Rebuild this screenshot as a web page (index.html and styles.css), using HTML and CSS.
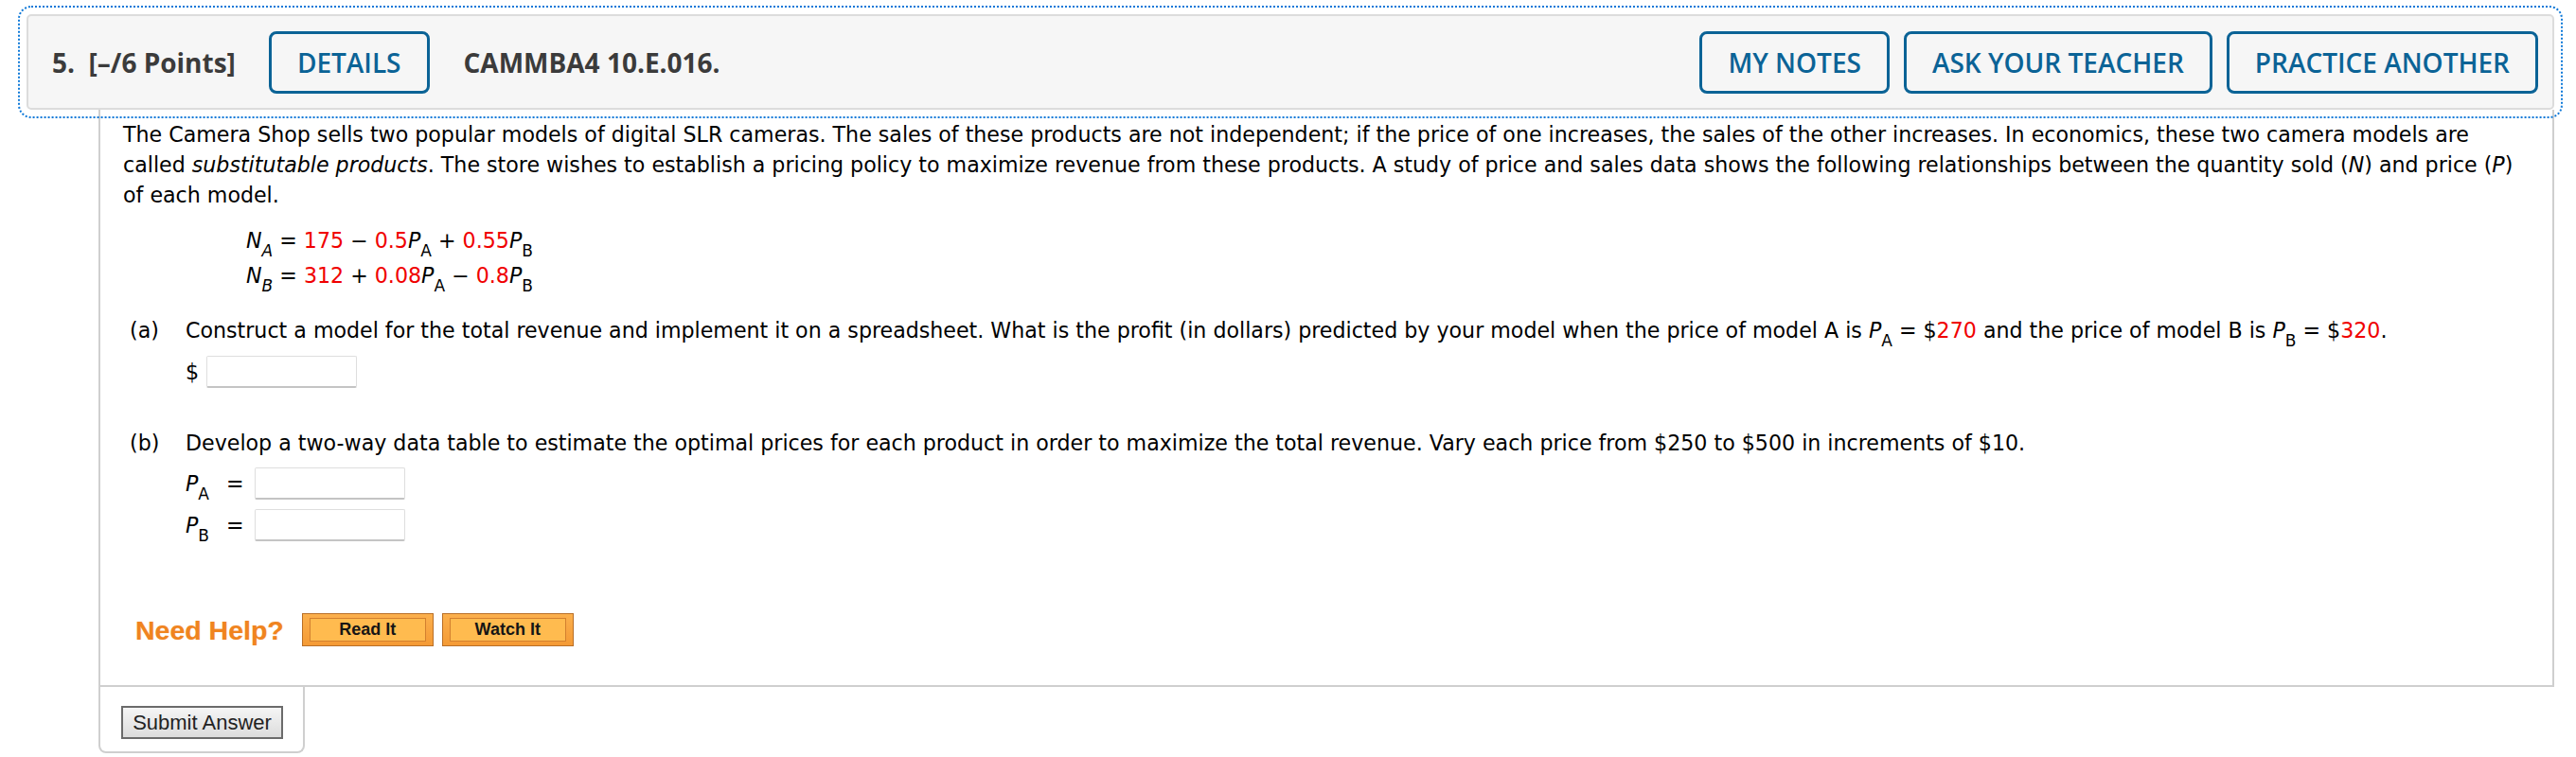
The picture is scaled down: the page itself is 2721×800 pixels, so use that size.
FILE: index.html
```html
<!DOCTYPE html>
<html>
<head>
<meta charset="utf-8">
<title>Question 5</title>
<link rel="stylesheet" href="styles.css">
</head>
<body>
<div class="question">
  <div class="qhead">
    <span class="qnum">5.&nbsp;&nbsp;[–/6 Points]</span>
    <button class="hbtn">DETAILS</button>
    <span class="qcode">CAMMBA4 10.E.016.</span>
    <div class="hright">
      <button class="hbtn">MY NOTES</button>
      <button class="hbtn">ASK YOUR TEACHER</button>
      <button class="hbtn">PRACTICE ANOTHER</button>
    </div>
  </div>
  <div class="qbody">
    <p class="intro">The Camera Shop sells two popular models of digital SLR cameras. The sales of these products are not independent; if the price of one increases, the sales of the other increases. In economics, these two camera models are<br>called <i>substitutable products</i>. The store wishes to establish a pricing policy to maximize revenue from these products. A study of price and sales data shows the following relationships between the quantity sold (<i>N</i>) and price (<i>P</i>)<br>of each model.</p>
    <div class="eqs">
      <div class="eq"><i>N</i><span class="sub"><i>A</i></span> = <span class="red">175</span> − <span class="red">0.5</span><i>P</i><span class="sub">A</span> + <span class="red">0.55</span><i>P</i><span class="sub">B</span></div>
      <div class="eq"><i>N</i><span class="sub"><i>B</i></span> = <span class="red">312</span> + <span class="red">0.08</span><i>P</i><span class="sub">A</span> − <span class="red">0.8</span><i>P</i><span class="sub">B</span></div>
    </div>
    <div class="part part-a">
      <span class="plabel">(a)</span>
      <div class="ptext">
        <div class="pline">Construct a model for the total revenue and implement it on a spreadsheet. What is the profit (in dollars) predicted by your model when the price of model A is <i>P</i><span class="sub">A</span> = $<span class="red">270</span> and the price of model B is <i>P</i><span class="sub">B</span> = $<span class="red">320</span>.</div>
        <div class="arow"><span class="dollar">$</span><input class="ans" type="text"></div>
      </div>
    </div>
    <div class="part part-b">
      <span class="plabel">(b)</span>
      <div class="ptext">
        <div class="pline">Develop a two-way data table to estimate the optimal prices for each product in order to maximize the total revenue. Vary each price from $250 to $500 in increments of $10.</div>
        <div class="brow"><span class="var"><i>P</i><span class="sub">A</span></span><span class="eqsign">=</span><input class="ans" type="text"></div>
        <div class="brow"><span class="var"><i>P</i><span class="sub">B</span></span><span class="eqsign">=</span><input class="ans" type="text"></div>
      </div>
    </div>
    <div class="help">
      <span class="needhelp">Need Help?</span>
      <button class="hlp"><span>Read It</span></button>
      <button class="hlp"><span>Watch It</span></button>
    </div>
  </div>
  <div class="submit-wrap">
    <button class="submit">Submit Answer</button>
  </div>
</div>
</body>
</html>
```
FILE: styles.css
```css
html, body {
  margin: 0;
  padding: 0;
  background: #ffffff;
}
body {
  font-family: "DejaVu Sans", Verdana, sans-serif;
  color: #000;
}
.question {
  margin: 15px 23px 0 28px;
}
.qhead {
  display: flex;
  align-items: center;
  height: 66px;
  padding: 16px 15px 15px 25px;
  background: #f6f6f6;
  border: 2px solid #dcdcdc;
  border-radius: 5px;
  outline: 2px dotted #0d78d8;
  outline-offset: 7px;
  font-family: "Open Sans", sans-serif;
}
.qnum, .qcode {
  font-size: 28px;
  font-weight: 700;
  color: #3b3b3b;
  white-space: nowrap;
}
.qnum { margin-right: 35px; }
.qcode { margin-left: 36px; }
.hbtn {
  height: 66px;
  padding: 0 27px;
  background: transparent;
  border: 3px solid #0b6396;
  border-radius: 8px;
  font-family: "Open Sans", sans-serif;
  font-size: 28px;
  font-weight: 600;
  color: #0b6396;
  white-space: nowrap;
  cursor: pointer;
}
.hright {
  margin-left: auto;
  display: flex;
  gap: 15px;
}
.qbody {
  margin-left: 76px;
  border: 2px solid #cfcfcf;
  border-top: none;
  padding: 10px 24px 41px 24px;
  font-size: 22.15px;
  line-height: 32px;
}
.intro {
  margin: 0;
  white-space: nowrap;
}
.red { color: #f00000; }
.sub {
  font-size: 17px;
  line-height: 0;
  vertical-align: -9px;
}
.eqs {
  margin-top: 14px;
  padding-left: 130px;
}
.eq {
  line-height: 37px;
  white-space: nowrap;
}
.part {
  display: flex;
  padding-left: 7px;
}
.part-a { margin-top: 23px; }
.part-b { margin-top: 42px; }
.plabel {
  width: 59px;
  flex: none;
}
.pline { white-space: nowrap; }
.arow {
  display: flex;
  align-items: center;
  margin-top: 11px;
  height: 34px;
}
.dollar { margin-right: 8px; }
.ans {
  box-sizing: border-box;
  width: 159px;
  height: 34px;
  margin: 0;
  border: 1px solid #dedede;
  border-bottom: 2px solid #c4c4c4;
  border-radius: 2px;
  background: #fff;
}
.brow {
  display: flex;
  align-items: center;
  height: 34px;
  margin-top: 10px;
}
.var {
  width: 43px;
  flex: none;
}
.eqsign {
  width: 30px;
  flex: none;
}
.help {
  display: flex;
  align-items: center;
  margin-top: 76px;
  padding-left: 13px;
  height: 35px;
}
.needhelp {
  font-family: "Liberation Sans", Arial, sans-serif;
  font-weight: 700;
  font-size: 28.5px;
  color: #f0841f;
  margin-right: 19px;
  white-space: nowrap;
  text-shadow: 0 0 1px rgba(240, 132, 31, 0.5);
}
.hlp {
  box-sizing: border-box;
  width: 139px;
  height: 35px;
  padding: 4px 7px;
  margin: 0 9px 0 0;
  border: 1px solid #b96f27;
  background: linear-gradient(#fbb04d, #f49a35);
  display: flex;
  cursor: pointer;
}
.hlp span {
  flex: 1;
  display: flex;
  align-items: center;
  justify-content: center;
  border: 1px solid #d3802f;
  background: #ffbb4f;
  font-family: "Liberation Sans", Arial, sans-serif;
  font-weight: 700;
  font-size: 18px;
  color: #151515;
}
.submit-wrap {
  box-sizing: border-box;
  width: 218px;
  margin-left: 76px;
  padding: 20px 0 13px 22px;
  border: 2px solid #cfcfcf;
  border-top: none;
  border-radius: 0 0 8px 8px;
}
.submit {
  display: block;
  box-sizing: border-box;
  width: 171px;
  height: 35px;
  padding: 0;
  border: 2px solid #6b6b6b;
  background: linear-gradient(#f5f5f5, #dcdcdc);
  font-family: "Liberation Sans", Arial, sans-serif;
  font-size: 22px;
  color: #222;
  cursor: pointer;
}
```
